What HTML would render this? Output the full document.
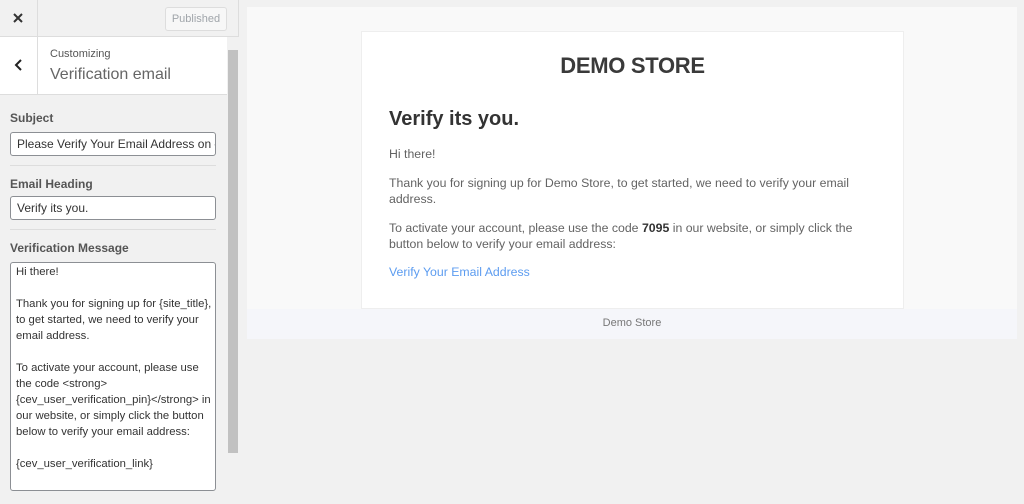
<!DOCTYPE html>
<html><head><meta charset="utf-8"><style>
*{box-sizing:border-box;margin:0;padding:0}
body{width:1024px;height:504px;overflow:hidden;background:#f1f1f1;font-family:"Liberation Sans",sans-serif;position:relative}
.side{position:absolute;left:0;top:0;width:239px;height:504px;background:#f1f1f1;border-right:1px solid #ddd}
.top{position:absolute;left:0;top:0;width:239px;height:37px;border-bottom:1px solid #ddd}
.x{position:absolute;left:0;top:0;width:38px;height:36px;border-right:1px solid #ddd}
.pub{position:absolute;left:165px;top:7px;width:62px;height:24px;border:1px solid #ddd;border-radius:3px;background:#f7f7f7;color:#a0a5aa;font-size:11px;text-align:center;line-height:22px}
.sec{position:absolute;left:0;top:37px;width:227px;height:58px;background:#fff;border-bottom:1px solid #ddd}
.back{position:absolute;left:0;top:0;width:38px;height:58px;border-right:1px solid #ddd}
.cz{position:absolute;left:50px;top:11px;font-size:11px;color:#555}
.ve{position:absolute;left:50px;top:29px;font-size:16px;color:#666;font-weight:300}
.lab{position:absolute;left:10px;font-size:12px;font-weight:bold;color:#555}
.inp{position:absolute;left:10px;width:206px;height:24px;border:1px solid #8c8f94;border-radius:3px;background:#fff;font-size:12px;color:#333;padding:0 6px;line-height:22px;white-space:nowrap;overflow:hidden}
.hr{position:absolute;left:10px;width:206px;height:1px;background:#ddd}
.ta{position:absolute;left:10px;top:262px;width:206px;height:229px;border:1px solid #8c8f94;border-radius:3px;background:#fff;font-size:11.3px;color:#333;padding:1px 5px;line-height:16px;white-space:nowrap;overflow:hidden}
.sb{position:absolute;left:227px;top:37px;width:12px;height:467px;background:#f1f1f1}
.th{position:absolute;left:228px;top:50px;width:10px;height:403px;background:#c1c1c1}
.pv{position:absolute;left:247px;top:7px;width:770px;height:332px;background:#f9f9f9}
.card{position:absolute;left:361px;top:31px;width:543px;height:278px;background:#fff;border:1px solid #eee}
.ft{position:absolute;left:247px;top:309px;width:770px;height:30px;background:#f5f6fa;text-align:center;font-size:11px;color:#777;line-height:28px}
.logo{position:absolute;left:0;width:100%;top:21px;text-align:center;font-size:22px;font-weight:bold;color:#3a3a3a;letter-spacing:-0.3px}
.h{position:absolute;left:27px;top:76px;font-size:20px;font-weight:bold;color:#333}
.p{position:absolute;left:27px;font-size:12.3px;color:#636363;line-height:16px;width:480px}
</style></head><body>
<div class="side">
<div class="top"><div class="x"><svg width="38" height="36"><path d="M14 14l8 8M22 14l-8 8" stroke="#333" stroke-width="2"/></svg></div><div class="pub">Published</div></div>
<div class="sec"><div class="back"><svg width="38" height="58"><path d="M21 23l-5 5 5 5" stroke="#222" stroke-width="2" fill="none"/></svg></div><div class="cz">Customizing</div><div class="ve">Verification email</div></div>
<div class="lab" style="top:111px">Subject</div>
<div class="inp" style="top:132px">Please Verify Your Email Address on {sit</div>
<div class="hr" style="top:165px"></div>
<div class="lab" style="top:177px">Email Heading</div>
<div class="inp" style="top:196px">Verify its you.</div>
<div class="hr" style="top:229px"></div>
<div class="lab" style="top:241px">Verification Message</div>
<div class="ta">Hi there!<br><br>Thank you for signing up for {site_title},<br>to get started, we need to verify your<br>email address.<br><br>To activate your account, please use<br>the code &lt;strong&gt;<br>{cev_user_verification_pin}&lt;/strong&gt; in<br>our website, or simply click the button<br>below to verify your email address:<br><br>{cev_user_verification_link}</div>
<div class="sb"></div><div class="th"></div>
</div>
<div class="pv"></div>
<div class="card">
<div class="logo">DEMO STORE</div>
<div class="h">Verify its you.</div>
<div class="p" style="top:114px">Hi there!</div>
<div class="p" style="top:143px">Thank you for signing up for Demo Store, to get started, we need to verify your email address.</div>
<div class="p" style="top:188px">To activate your account, please use the code <b style="color:#333">7095</b> in our website, or simply click the button below to verify your email address:</div>
<div class="p" style="top:232px;color:#5c9cf0">Verify Your Email Address</div>
</div>
<div class="ft">Demo Store</div>
</body></html>
